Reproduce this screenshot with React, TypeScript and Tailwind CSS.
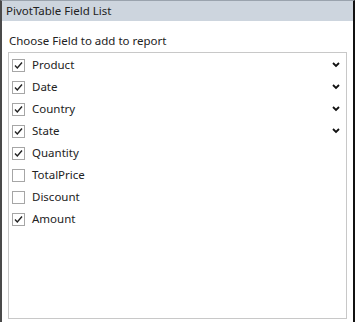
import React from 'react';

type Field = { name: string; checked: boolean; menu: boolean };

const fields: Field[] = [
    { name: 'Product', checked: true, menu: true },
    { name: 'Date', checked: true, menu: true },
    { name: 'Country', checked: true, menu: true },
    { name: 'State', checked: true, menu: true },
    { name: 'Quantity', checked: true, menu: false },
    { name: 'TotalPrice', checked: false, menu: false },
    { name: 'Discount', checked: false, menu: false },
    { name: 'Amount', checked: true, menu: false },
];

const CheckBox: React.FC<{ checked: boolean }> = ({ checked }) => (
    <div className="w-[13px] h-[13px] border border-[#a6a6a6] bg-white flex items-center justify-center shrink-0">
        {checked && (
            <svg width="9" height="9" viewBox="0 0 9 9">
                <path d="M1 4.5 L3.3 7 L8 1.5" fill="none" stroke="#222" strokeWidth="1.4" />
            </svg>
        )}
    </div>
);

const Chevron: React.FC = () => (
    <svg width="8" height="6" viewBox="0 0 8 6">
        <path d="M1 1 L4 4 L7 1" fill="none" stroke="#111" strokeWidth="1.8" />
    </svg>
);

const App: React.FC = () => {
    return (
        <div className="w-[355px] h-[322px] flex flex-col bg-white border-l-2 border-l-[#4a4a4a] border-r-2 border-r-[#111] border-t border-t-[#9aa3ad] overflow-hidden" style={{ fontFamily: '"Noto Sans", sans-serif' }}>
            <div className="h-[20px] bg-[#cdd5de] flex items-center pl-[4px] text-[11.5px] text-[#222]">PivotTable Field List</div>
            <div className="flex-1 flex flex-col px-[6px] pb-[3px]">
                <div className="h-[31px] flex items-end pl-[1px] pb-[3px] text-[11.5px] text-[#222]">Choose Field to add to report</div>
                <div className="flex-1 border border-[#c8c8c8] pt-[1px]">
                    {fields.map(f => (
                        <div key={f.name} className="h-[22px] flex items-center pl-[3px] pr-[6px]">
                            <CheckBox checked={f.checked} />
                            <span className="ml-[7px] flex-1 text-[11.5px] text-[#222]">{f.name}</span>
                            {f.menu && <Chevron />}
                        </div>
                    ))}
                </div>
            </div>
        </div>
    );
};

export default App;
